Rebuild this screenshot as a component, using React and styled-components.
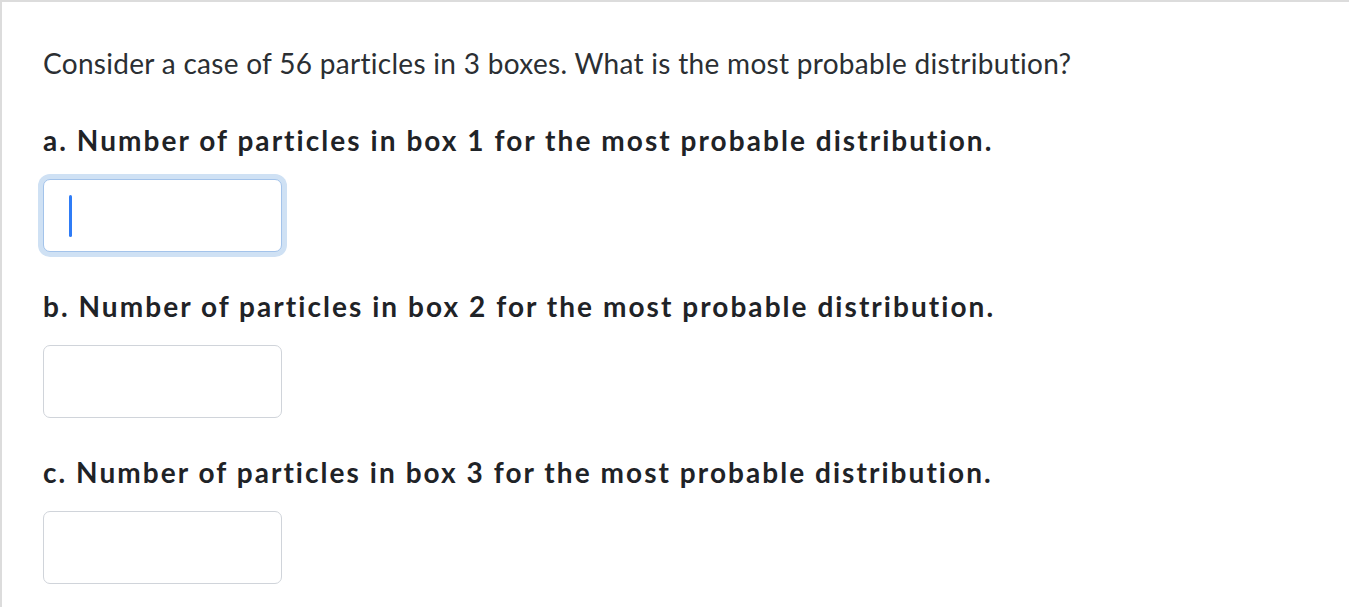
import React from 'react'
import styled, { createGlobalStyle } from 'styled-components'

const GlobalStyle = createGlobalStyle`
  html, body {
    margin: 0;
    padding: 0;
    background: #ffffff;
  }
  body {
    font-family: 'Lato', 'Noto Sans', sans-serif;
    color: #2b2f33;
  }
`

const Page = styled.div`
  box-sizing: border-box;
  width: 1349px;
  height: 607px;
  overflow: hidden;
  border-top: 2px solid #dcdcdc;
  border-left: 2px solid #dcdcdc;
  padding: 43px 0 0 41px;
`

const Question = styled.p`
  margin: 0 0 41px;
  font-size: 28px;
  line-height: 36px;
  letter-spacing: 0.3px;
  color: #2b2f33;
`

const Part = styled.section`
  display: flex;
  flex-direction: column;
  align-items: flex-start;
  gap: 21px;
  margin-bottom: 36px;
`

const Label = styled.h2`
  margin: 0;
  font-size: 28px;
  line-height: 36px;
  font-weight: 700;
  letter-spacing: 2.05px;
  color: #1f2327;
`

const AnswerBox = styled.div`
  box-sizing: border-box;
  width: 239px;
  height: 73px;
  display: flex;
  align-items: center;
  padding-left: 25px;
  border: 1.5px solid ${p => (p.$focused ? '#a3c3ea' : '#d0d4da')};
  border-radius: 7px;
  background: #fff;
  box-shadow: ${p => (p.$focused ? '0 0 0 5px #cfe1f4' : 'none')};
`

const Caret = styled.span`
  display: block;
  width: 3px;
  height: 42px;
  border-radius: 2px;
  background: #2f7cf6;
`

const parts = [
  { key: 'a', box: 1, focused: true },
  { key: 'b', box: 2 },
  { key: 'c', box: 3 }
]

const App = () => (
  <>
    <GlobalStyle />
    <Page>
      <Question>
        Consider a case of 56 particles in 3 boxes. What is the most probable distribution?
      </Question>
      {parts.map(part => (
        <Part key={part.key}>
          <Label>
            {part.key}. Number of particles in box {part.box} for the most probable distribution.
          </Label>
          <AnswerBox $focused={part.focused}>
            {part.focused && <Caret />}
          </AnswerBox>
        </Part>
      ))}
    </Page>
  </>
)

export default App
